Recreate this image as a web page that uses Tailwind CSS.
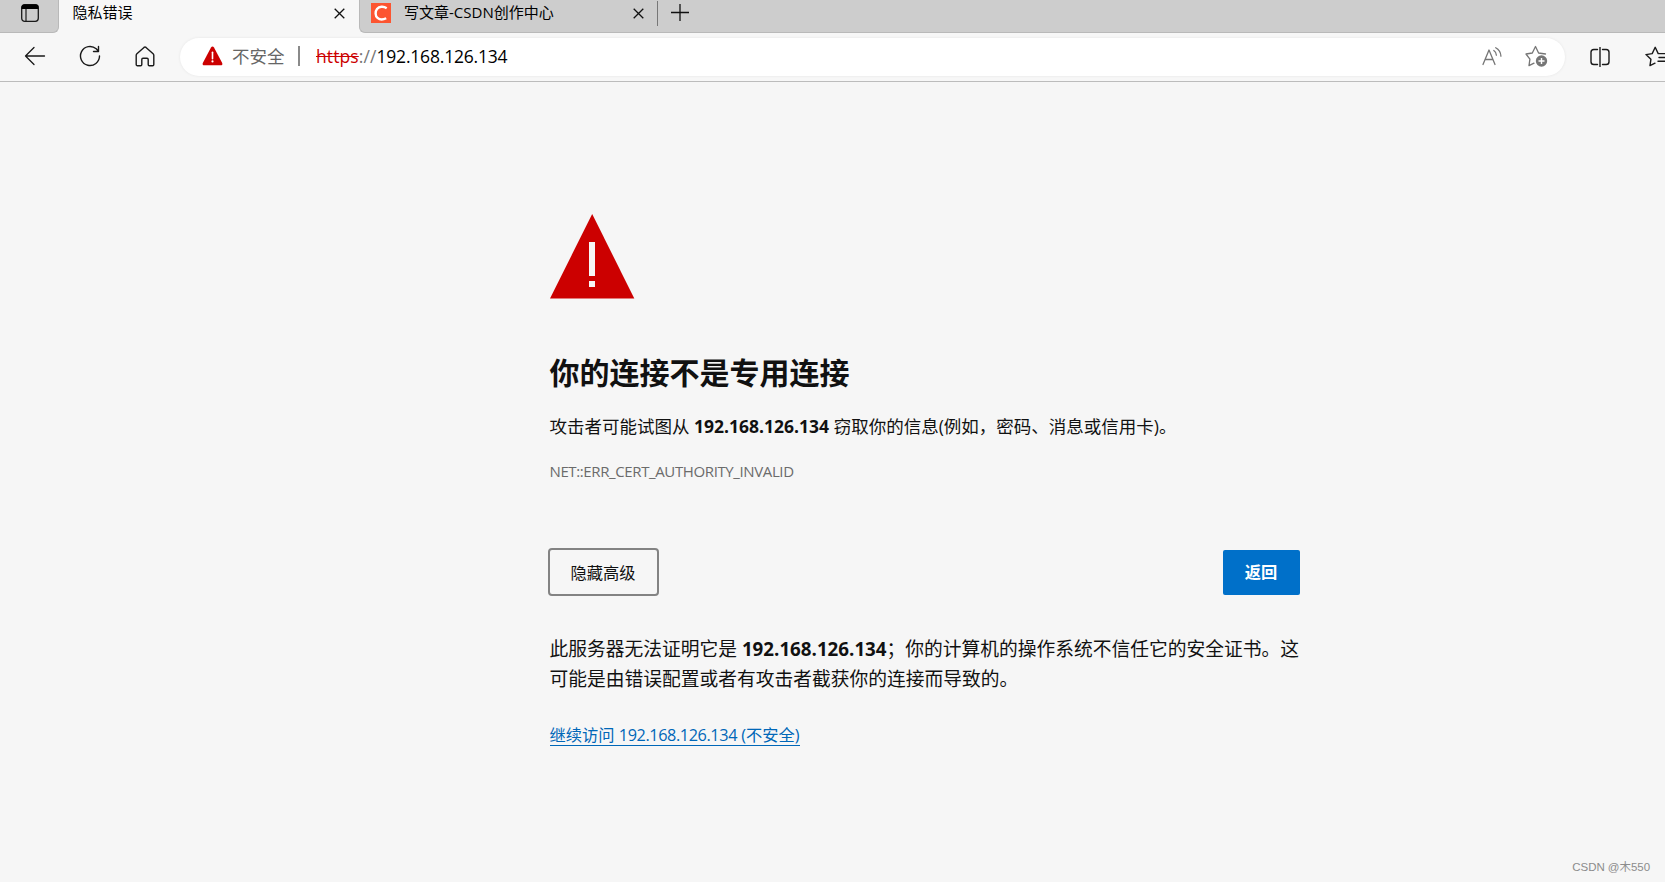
<!DOCTYPE html>
<html lang="zh-CN">

<head>
    <meta charset="UTF-8">
    <meta name="viewport" content="width=device-width, initial-scale=1.0">
    <title>隐私错误</title>
    <script src="https://cdn.jsdelivr.net/npm/@tailwindcss/browser@4"></script>
</head>

<body class="relative bg-[#f6f6f6] h-screen overflow-hidden text-[#111] font-['Open_Sans','Noto_Sans_CJK_SC',sans-serif]">
    <!-- Tab strip -->
    <div class="flex h-[33px] bg-[#f7f7f7] text-[15px] text-black">
        <div class="w-[59px] shrink-0 bg-[#cdcdcd] border-r border-b border-[#b9b9b9] rounded-br-md pl-[21px] pt-1">
            <svg width="18" height="18" viewBox="0 0 18 18" fill="none">
                <rect x="0.7" y="0.7" width="16.6" height="16.6" rx="3" stroke="#1a1a1a" stroke-width="1.3" />
                <path d="M0.5 5V3.5a3 3 0 0 1 3-3h11a3 3 0 0 1 3 3V5z" fill="#000" />
                <path d="M5 5v12" stroke="#1a1a1a" stroke-width="1.2" />
            </svg>
        </div>
        <div class="flex w-[300px] shrink-0 pl-[13.5px]">
            <span class="leading-[24px]">隐私错误</span>
            <svg class="ml-auto mr-[14px] mt-2" width="11" height="11" viewBox="0 0 11 11" stroke="#111" stroke-width="1.3">
                <path d="M0.7 0.7l9.6 9.6M10.3 0.7L0.7 10.3" />
            </svg>
        </div>
        <div class="flex grow bg-[#cdcdcd] border-l border-b border-[#b9b9b9] rounded-bl-md">
            <div class="flex w-[297px] shrink-0 pl-[11px]">
                <svg class="mt-[3px] shrink-0" width="20" height="20" viewBox="0 0 20 20" fill="none">
                    <path d="M0 0h20v20H0z" fill="#fc5531" />
                    <path d="M15.7 5.2C12.5 3 8.2 3.3 6 6.1c-2 2.5-1.8 6.9.5 8.8 2.2 1.8 5.8 1.8 8.7.3" stroke="#fff" stroke-width="2.4" />
                </svg>
                <span class="ml-[13px] leading-[24px] whitespace-nowrap">写文章-CSDN创作中心</span>
                <svg class="ml-auto mr-[13px] mt-2" width="11" height="11" viewBox="0 0 11 11" stroke="#111" stroke-width="1.3">
                    <path d="M0.7 0.7l9.6 9.6M10.3 0.7L0.7 10.3" />
                </svg>
            </div>
            <div class="mt-px h-[25px] w-px bg-[#777]"></div>
            <svg class="ml-[13px] mt-1" width="18" height="17" viewBox="0 0 18 17" stroke="#111" stroke-width="1.3">
                <path d="M0 8.5h18M9 0v17" />
            </svg>
        </div>
    </div>

    <!-- Toolbar -->
    <div class="flex h-[49px] items-center border-b border-[#bcbcbc] bg-[#f7f7f7] pl-[24px] pb-[2px]">
        <svg class="shrink-0" width="22" height="20" viewBox="0 0 22 20" fill="none" stroke="#1a1a1a" stroke-width="1.3" stroke-linecap="round" stroke-linejoin="round">
            <path d="M10 1.5L1.5 10l8.5 8.5M1.5 10H20.5" />
        </svg>
        <svg class="ml-[33px] shrink-0" width="22" height="22" viewBox="0 0 22 22" fill="none" stroke="#1a1a1a" stroke-width="1.4" stroke-linecap="round" stroke-linejoin="round">
            <path d="M20.5 11a9.500 9.500 0 1 1-3.300-7.200l2.300 2.400M19.500 1.500v5h-5" />
        </svg>
        <svg class="ml-[34px] shrink-0" width="20" height="21" viewBox="0 0 20 21" fill="none" stroke="#1a1a1a" stroke-width="1.4" stroke-linejoin="round">
            <path d="M1.2 9.2c0-.6.3-1.1.7-1.5L9 1.4c.6-.5 1.4-.5 2 0l7.100 6.300c.4.4.7.9.7 1.500v9.300c0 .7-.5 1.200-1.200 1.200h-3.200c-.7 0-1.200-.5-1.200-1.200v-5c0-.7-.5-1.200-1.200-1.200H8c-.7 0-1.200.5-1.200 1.200v5c0 .7-.5 1.200-1.200 1.200H2.400c-.7 0-1.200-.5-1.200-1.200z" />
        </svg>
        <div class="mt-[2px] ml-[25px] flex h-[38px] w-[1385px] shrink-0 items-center rounded-full bg-white pl-[22px] pb-[2px] shadow-[0_0_3px_rgba(0,0,0,0.08)]">
            <svg class="shrink-0" width="21" height="20" viewBox="0 0 21 20">
                <path d="M9 1.5c.7-1.200 2.300-1.200 3 0l8.200 15.400c.6 1.200-.1 2.400-1.400 2.400H2.200c-1.300 0-2-1.200-1.400-2.400z" fill="#c00" />
                <path d="M10.5 6.3v6.4" stroke="#fff" stroke-width="1.6" stroke-linecap="round" />
                <circle cx="10.5" cy="15.4" r="1.1" fill="#fff" />
            </svg>
            <span class="ml-[9px] text-[17.5px] text-[#666]">不安全</span>
            <div class="ml-[13px] h-5 w-[2px] bg-[#8a8a8a]"></div>
            <span class="ml-[16.5px] text-[17.5px] text-[#767676] tracking-[0.1px]"><span class="text-[#c00] line-through">https</span>://<span class="text-black tracking-[-0.2px]">192.168.126.134</span></span>
            <svg class="ml-auto shrink-0" width="20" height="19" viewBox="0 0 20 19" fill="none" stroke="#767676" stroke-width="1.3" stroke-linecap="round" stroke-linejoin="round">
                <path d="M1 17.5L7 3l6 14.5M3.2 12.5h7.6M11.8 3.5c1.700 1.100 2.500 2.700 2.600 4.700M13.700.8c3.200 1.700 5 4.600 5.200 8.300" />
            </svg>
            <svg class="ml-[23px] mr-[17px] shrink-0" width="23" height="22" viewBox="0 0 23 22" fill="none">
                <path d="M9 18.2l-5 2.400.9-6.500L1 9l6.300-1L10.500 1.500 13.600 8l6.900 1" stroke="#767676" stroke-width="1.3" stroke-linejoin="round" stroke-linecap="round" />
                <circle cx="16.5" cy="16" r="5.7" fill="#767676" />
                <path d="M16.5 13v6M13.5 16h6" stroke="#fff" stroke-width="1.4" />
            </svg>
        </div>
        <svg class="ml-[25px] mt-px shrink-0" width="20" height="20" viewBox="0 0 20 20" fill="none" stroke="#1a1a1a" stroke-width="1.4" stroke-linecap="round">
            <path d="M7.5 2.500H3.800A2.800 2.800 0 0 0 1 5.300v9.400a2.800 2.800 0 0 0 2.800 2.800h3.700M12.500 2.500h3.700A2.800 2.800 0 0 1 19 5.300v9.400a2.800 2.800 0 0 1-2.800 2.800h-3.700M10 .5v19" />
        </svg>
        <svg class="ml-[35px] shrink-0" width="25" height="21" viewBox="0 0 25 21" fill="none" stroke="#1a1a1a" stroke-width="1.4" stroke-linecap="round" stroke-linejoin="round">
            <path d="M10 17.2l-5 2.400.9-6.300L1 8.600l6.200-1L10.200 1.300l3 6.300H24M14 11.500h10M13 15.300h11" />
        </svg>
    </div>

    <!-- Certificate warning -->
    <main class="ml-[549px] w-[751px] pt-[132px]">
        <svg width="86" height="85" viewBox="0 0 86 85">
            <path d="M43.2 0L85.3 84.5H1z" fill="#c00" />
            <path d="M40 28h6v34h-6zM40 67h6v6h-6z" fill="#f6f6f6" />
        </svg>
        <h1 class="mt-[54px] pl-[0.5px] text-[30px] leading-10 font-bold">你的连接不是专用连接</h1>
        <p class="mt-[19px] pl-[0.5px] text-[17.5px] leading-7 whitespace-nowrap">攻击者可能试图从 <strong>192.168.126.134</strong> 窃取你的信息(例如，密码、消息或信用卡)。</p>
        <p class="mt-[21px] pl-[0.5px] text-[15px] leading-5 text-[#6b6b6b]"><span class="tracking-[-0.38px]">NET::ERR_CERT_AUTHORITY_INVALID</span></p>
        <div class="mt-[67px] -ml-px flex items-center justify-between">
            <button class="h-12 w-[111px] rounded-[4px] border-2 border-[#838383] pt-[2px] pr-px text-[16.25px]">隐藏高级</button>
            <button class="h-[45px] w-[77px] rounded-[2px] bg-[#0070c9] pt-px pr-px text-[16.25px] font-bold text-white">返回</button>
        </div>
        <div class="mt-[38px] pl-[0.5px] text-[18.75px] leading-[30px] whitespace-nowrap">
            <p>此服务器无法证明它是 <strong>192.168.126.134</strong>；你的计算机的操作系统不信任它的安全证书。这</p>
            <p>可能是由错误配置或者有攻击者截获你的连接而导致的。</p>
        </div>
        <a href="#" class="mt-[29px] ml-[0.5px] inline-block h-[23px] border-b border-[#0067b8] text-[16.25px] leading-6 text-[#0067b8]">继续访问 <span class="tracking-[-0.4px]">192.168.126.134</span> (不安全)</a>
    </main>

    <div class="absolute right-[15px] bottom-[5px] text-[11.5px] leading-5 text-[#8c8c8c] tracking-[-0.05px] font-['Liberation_Sans','Noto_Sans_CJK_SC',sans-serif]">CSDN @木550</div>
</body>

</html>
